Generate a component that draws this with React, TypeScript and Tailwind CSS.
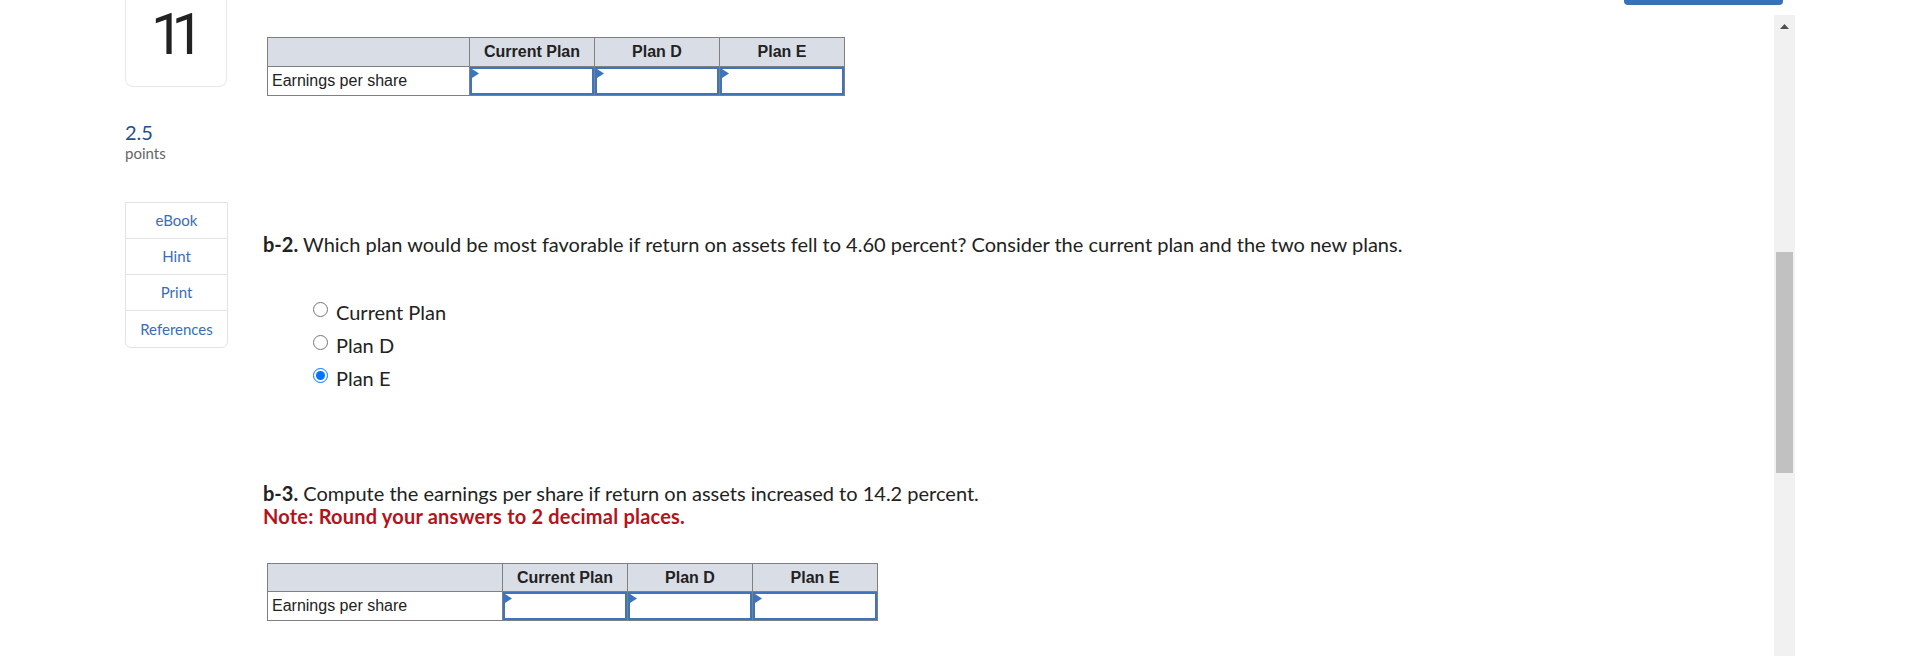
import type { ReactNode } from 'react'

const plans = ['Current Plan', 'Plan D', 'Plan E']

const sideLinks = ['eBook', 'Hint', 'Print', 'References']

function InputCell() {
  return (
    <div className="relative h-full w-full border-2 border-[#3d74bc] bg-white">
      <svg className="absolute left-0 top-0" width="7" height="9" viewBox="0 0 7 9">
        <path d="M0 0 L7 4.5 L0 9 Z" fill="#3d74bc" />
      </svg>
    </div>
  )
}

function EpsTable({ wide }: { wide?: boolean }) {
  const first = wide ? 'w-[235px]' : 'w-[202px]'
  return (
    <div className="ml-[4px] flex w-fit flex-col border-l border-t border-[#808080] font-['Liberation_Sans',Arial,sans-serif] text-[16px] text-[#222]">
      <div className={`flex bg-[#d9dde6] ${wide ? 'h-[28px]' : 'h-[29px]'}`}>
        <div className={`${first} border-b border-r border-[#808080]`} />
        {plans.map(p => (
          <div key={p} className="flex w-[125px] items-center justify-center border-b border-r border-[#808080] font-bold">
            {p}
          </div>
        ))}
      </div>
      <div className="flex h-[29px] bg-white">
        <div className={`${first} flex items-center border-b border-r border-[#808080] pl-[4px]`}>Earnings per share</div>
        {plans.map(p => (
          <div key={p} className="w-[125px] border-b border-r border-[#808080]">
            <InputCell />
          </div>
        ))}
      </div>
    </div>
  )
}

function Radio({ label, checked }: { label: string; checked?: boolean }) {
  return (
    <label className="flex h-[33px] items-center gap-[8px]">
      <input type="radio" name="b2" defaultChecked={checked} className="m-0 h-[15px] w-[15px]" />
      <span className="mt-[4px]">{label}</span>
    </label>
  )
}

function Question({ tag, children }: { tag: string; children: ReactNode }) {
  return (
    <p>
      <span className="font-bold">{tag}</span> {children}
    </p>
  )
}

export default function App() {
  return (
    <div className="relative h-[656px] w-full overflow-hidden bg-white font-['Lato','Liberation_Sans',sans-serif] text-[#222]">
      {/* top button, cut off by the window edge */}
      <div className="absolute left-[1624px] top-0 h-[5px] w-[159px] rounded-b-[4px] bg-[#3572b9]" />

      <div className="flex h-full">
        {/* left rail */}
        <aside className="ml-[125px] flex w-[103px] shrink-0 flex-col">
          <div className="flex h-[87px] w-[102px] items-start justify-center rounded-b-[8px] border border-t-0 border-[#e8e8e8]">
            <span className="mr-[7px] pr-[2px] font-['Roboto',sans-serif] text-[58px] leading-[68px] tracking-[-12px] text-[#222]">11</span>
          </div>
          <div className="mt-[33px] text-[20px] leading-[24px] text-[#1f4f8f]">2.5</div>
          <div className="text-[15px] leading-[18px] text-[#666]">points</div>

          <div className="mt-[40px] flex w-[103px] flex-col rounded-b-[6px] border border-[#e3e3e3]">
            {sideLinks.map((s, i) => (
              <div
                key={s}
                className={`flex h-[36px] items-center justify-center text-[15px] text-[#3b6cb4] ${i < sideLinks.length - 1 ? 'border-b border-[#e3e3e3]' : ''}`}
              >
                {s}
              </div>
            ))}
          </div>
        </aside>

        {/* question body */}
        <main className="ml-[35px] flex flex-col items-start">
          <div className="mt-[37px]">
            <EpsTable />
          </div>

          <div className="mt-[136px] text-[20px] leading-[24px]">
            <Question tag="b-2.">
              Which plan would be most favorable if return on assets fell to 4.60 percent? Consider the current plan and the two new plans.
            </Question>
          </div>

          <div className="ml-[50px] mt-[37px] flex flex-col text-[20px] leading-[24px]">
            <Radio label="Current Plan" />
            <Radio label="Plan D" />
            <Radio label="Plan E" checked />
          </div>

          <div className="mt-[90px] text-[20px] leading-[23px]">
            <Question tag="b-3.">Compute the earnings per share if return on assets increased to 14.2 percent.</Question>
            <p className="font-bold tracking-[0.2px] text-[#b3131b]">Note: Round your answers to 2 decimal places.</p>
          </div>

          <div className="mt-[35px]">
            <EpsTable wide />
          </div>
        </main>

        {/* scrollbar */}
        <div className="ml-auto mr-[125px] mt-[15px] flex w-[21px] shrink-0 flex-col items-center bg-[#f1f1f1]">
          <svg className="mt-[9px]" width="9" height="5" viewBox="0 0 9 5">
            <path d="M0 5 L4.5 0 L9 5 Z" fill="#505050" />
          </svg>
          <div className="mt-[223px] h-[221px] w-[17px] bg-[#c1c1c1]" />
        </div>
      </div>
    </div>
  )
}
